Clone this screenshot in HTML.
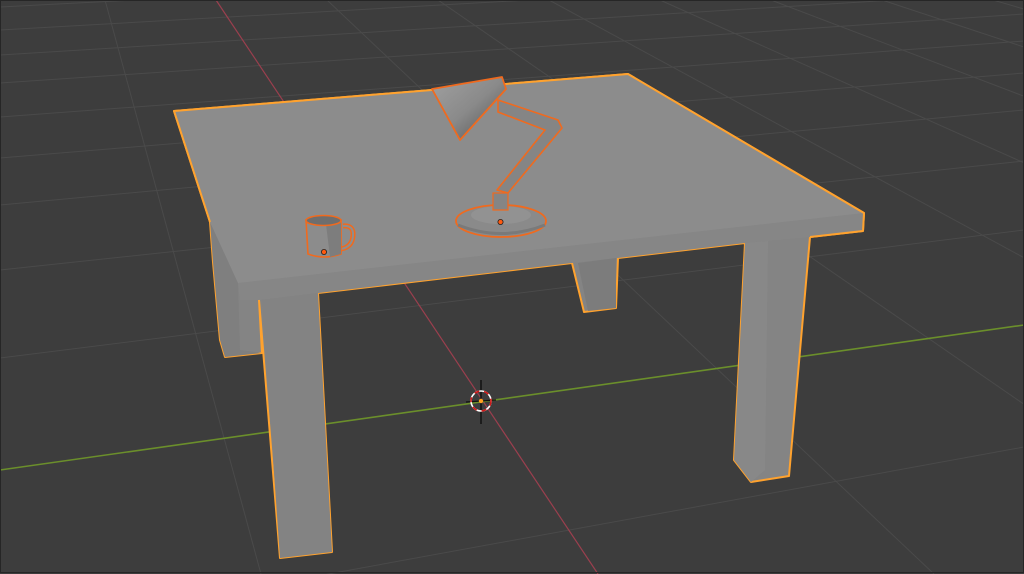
<!DOCTYPE html>
<html><head><meta charset="utf-8"><style>
html,body{margin:0;padding:0;background:#3d3d3d;overflow:hidden;width:1024px;height:574px;}
svg{display:block;}
</style></head><body>
<svg width="1024" height="574" viewBox="0 0 1024 574" xmlns="http://www.w3.org/2000/svg">
<rect width="1024" height="574" fill="#3d3d3d"/>
<g stroke="#4a4a4a" stroke-width="1" fill="none">
<line x1="0" y1="7" x2="1024" y2="-46"/>
<line x1="0" y1="30" x2="1024" y2="-28"/>
<line x1="0" y1="55" x2="1024" y2="-8"/>
<line x1="0" y1="83" x2="1024" y2="14"/>
<line x1="0" y1="117" x2="1024" y2="41"/>
<line x1="0" y1="158" x2="1024" y2="73"/>
<line x1="0" y1="205" x2="1024" y2="110"/>
<line x1="0" y1="270" x2="1024" y2="161"/>
<line x1="0" y1="358" x2="1024" y2="230"/>
<line x1="0" y1="634" x2="1024" y2="447"/>
<line x1="-6" y1="0" x2="-75" y2="574"/>
<line x1="105" y1="0" x2="261" y2="574"/>
<line x1="327" y1="0" x2="934" y2="574"/>
<line x1="438" y1="0" x2="1270" y2="574"/>
<line x1="549" y1="0" x2="1607" y2="574"/>
<line x1="660" y1="0" x2="1943" y2="574"/>
<line x1="771" y1="0" x2="2280" y2="574"/>
<line x1="882" y1="0" x2="2616" y2="574"/>
<line x1="993" y1="0" x2="2952" y2="574"/>
</g>
<line x1="216" y1="0" x2="598" y2="574" stroke="#9b3f4e" stroke-width="1.2"/>
<line x1="0" y1="470" x2="1024" y2="325" stroke="#6b8f2b" stroke-width="1.6"/>

<g>
<line x1="481" y1="380" x2="481" y2="424" stroke="#111" stroke-width="1.5"/>
<line x1="466" y1="402" x2="496" y2="400" stroke="#111" stroke-width="1.2"/>
<circle cx="481" cy="401" r="10" fill="none" stroke="#fff" stroke-width="1.6"/>
<circle cx="481" cy="401" r="10" fill="none" stroke="#d01818" stroke-width="1.6" stroke-dasharray="5 5"/>
<circle cx="481" cy="401" r="2.2" fill="#ffa020"/>
</g>

<polygon points="174,111 628,74 864,213 863,231 810,237 789,476 751,482 734,460 745,243 618,258 616,308 584,312 572,263 318,293 332,552 280,558 259,300 262,353 225,357 220,340 213,262 210,222" fill="#848484" stroke="#ffa22e" stroke-width="2" stroke-linejoin="round"/>
<polygon points="210,222 238,283 240,350 262,353 225,357 220,340 213,262" fill="#7f7f7f"/>
<polygon points="238,283 864,213 863,231 810,237 745,243 618,258 572,263 318,293 259,300 240,300" fill="#868686"/>
<polygon points="578,263 616,258 616,308 588,311" fill="#7c7c7c"/>
<polygon points="745,243 768,241 765,470 751,482 734,460" fill="#888888"/>
<polygon points="262,300 318,293 332,552 280,558" fill="#838383"/>
<polygon points="174,111 628,74 864,213 238,283 210,222" fill="#8c8c8c"/>
<polyline points="210,222 174,111 628,74 864,213 863,231 810,237" fill="none" stroke="#ffa22e" stroke-width="2" stroke-linejoin="round"/>

<!-- mug -->
<path d="M343,226 Q354,225 353,236 Q352,247 341,249" fill="none" stroke="#f06a1e" stroke-width="5"/>
<path d="M343,226 Q354,225 353,236 Q352,247 341,249" fill="none" stroke="#8e8e8e" stroke-width="2"/>
<path d="M306,220 L308,254 Q324,260 341,254 L341,220 Z" fill="#8c8c8c" stroke="#f06a1e" stroke-width="1.6"/>
<path d="M326,224 L341,221 L341,254 L330,257 Z" fill="#7d7d7d"/>
<ellipse cx="323.5" cy="220.5" rx="17.5" ry="5" fill="#6e6e6e" stroke="#f06a1e" stroke-width="1.6"/>
<circle cx="324" cy="252" r="2.6" fill="#ff5a10" stroke="#222" stroke-width="0.8"/>

<path d="M498,100 L558,120 L562,128 L508,193 L497,190 L545,130 L498,112 Z" fill="#858585" stroke="#f06a1e" stroke-width="1.6" stroke-linejoin="round"/>
<ellipse cx="501" cy="221" rx="45" ry="16" fill="#8a8a8a" stroke="#f06a1e" stroke-width="1.8"/>
<ellipse cx="501" cy="215" rx="30" ry="9" fill="#929292"/>
<path d="M458,225 Q501,242 545,225" fill="none" stroke="#7a7a7a" stroke-width="3"/>
<rect x="493" y="193" width="15" height="17" fill="#858585" stroke="#f06a1e" stroke-width="1.2"/>
<circle cx="500.5" cy="222" r="2.6" fill="#ff5a10" stroke="#222" stroke-width="0.8"/>
<defs>
<linearGradient id="sh" x1="0" y1="0" x2="1" y2="1">
<stop offset="0" stop-color="#a0a0a0"/><stop offset="0.5" stop-color="#8a8a8a"/><stop offset="1" stop-color="#505050"/>
</linearGradient>
</defs>
<polygon points="432,89 502,77 506,89 460,140" fill="url(#sh)" stroke="#f06a1e" stroke-width="1.8" stroke-linejoin="round"/>

<rect x="0.5" y="0.5" width="1023" height="572" fill="none" stroke="#262626" stroke-width="1"/>
</svg>
</body></html>
